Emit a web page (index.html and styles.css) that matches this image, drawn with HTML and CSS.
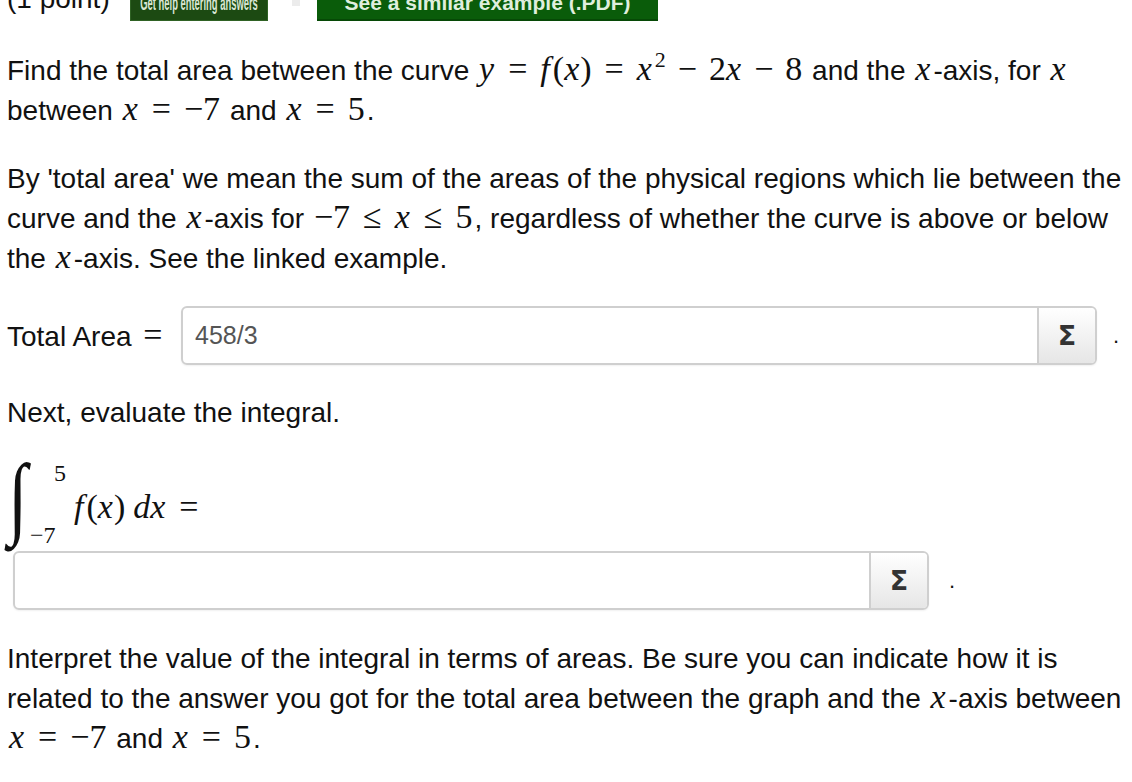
FILE: index.html
```html
<!DOCTYPE html>
<html>
<head>
<meta charset="utf-8">
<link rel="stylesheet" href="styles.css">
</head>
<body>
<div class="top">
  <span class="points">(1 point)</span>
  <span class="btn btn-help"><span class="squeeze">Get help entering answers</span></span>
  <span class="sep"></span>
  <span class="btn btn-example">See a similar example (.PDF)</span>
</div>

<p class="para first">Find the total area between the curve <span class="m"><i>y</i><span class="rel">=</span><i class="f">f</i>(<i>x</i>)<span class="rel">=</span><i>x</i><sup>2</sup><span class="bin">−</span>2<i>x</i><span class="bin">−</span>8</span> and the <span class="m"><i>x</i></span>-axis, for <span class="m"><i>x</i></span><br>between <span class="m"><i>x</i><span class="rel">=</span>−7</span> and <span class="m"><i>x</i><span class="rel">=</span>5</span>.</p>

<p class="para">By 'total area' we mean the sum of the areas of the physical regions which lie between the<br>curve and the <span class="m"><i>x</i></span>-axis for <span class="m">−7<span class="rel">≤</span><i>x</i><span class="rel">≤</span>5</span>, regardless of whether the curve is above or below<br>the <span class="m"><i>x</i></span>-axis. See the linked example.</p>

<div class="answer-row">
  <span class="label">Total Area <span class="m eq">=</span></span>
  <div class="field wide">
    <span class="value">458/3</span>
    <span class="sigma">Σ</span>
  </div>
  <span class="dot">.</span>
</div>

<p class="para next">Next, evaluate the integral.</p>

<div class="integral">
  <span class="int-sign">∫</span>
  <span class="limits"><span class="up">5</span><span class="low">−7</span></span>
  <span class="m integrand"><i class="f">f</i>(<i>x</i>)<span class="thin"></span><i>dx</i><span class="rel">=</span></span>
</div>

<div class="answer-row second">
  <div class="field narrow">
    <span class="value"></span>
    <span class="sigma">Σ</span>
  </div>
  <span class="dot">.</span>
</div>

<p class="para last">Interpret the value of the integral in terms of areas. Be sure you can indicate how it is<br>related to the answer you got for the total area between the graph and the <span class="m"><i>x</i></span>-axis between<br><span class="m"><i>x</i><span class="rel">=</span>−7</span> and <span class="m"><i>x</i><span class="rel">=</span>5</span>.</p>
</body>
</html>
```
FILE: styles.css
```css
html, body {
  margin: 0;
  padding: 0;
  background: #ffffff;
}
body {
  font-family: "Liberation Sans", Arial, sans-serif;
  font-size: 28px;
  color: #111;
  overflow: hidden;
}
.top {
  display: flex;
  align-items: flex-end;
  height: 21px;
  overflow: hidden;
  padding-left: 7px;
}
.points {
  font-size: 28px;
  line-height: 28px;
  margin-bottom: 8px;
  width: 123px;
  white-space: nowrap;
}
.btn {
  display: flex;
  align-items: flex-end;
  justify-content: center;
  font-weight: bold;
  height: 40px;
  box-sizing: border-box;
  white-space: nowrap;
  overflow: hidden;
}
.btn-help {
  width: 138px;
  background: #1c4a12;
  border: 1px solid #2f6224;
  color: #d9e6d4;
  font-size: 20px;
  line-height: 20px;
  padding-bottom: 7px;
}
.squeeze {
  display: inline-block;
  transform: scaleX(0.47);
  transform-origin: center;
  margin: 0 -80px;
}
.sep {
  width: 8px;
  height: 6px;
  background: #ececec;
  align-self: flex-start;
  margin: 0 17px 0 24px;
}
.btn-example {
  width: 341px;
  background: #0a5c0a;
  border-bottom: 2px solid #064906;
  font-size: 21px;
  line-height: 21px;
  padding-bottom: 6px;
  color: #dfeedd;
}
.para {
  margin: 0;
  padding-left: 7px;
  line-height: 40px;
  white-space: nowrap;
}
.para.first {
  margin-top: 30px;
}
.para + .para {
  margin-top: 28px;
}
.m {
  font-family: "Liberation Serif", "Times New Roman", serif;
  font-size: 34px;
  line-height: 1;
  margin: 0 2px;
}
.m i {
  font-style: italic;
  margin-right: 1px;
}
.m i.f {
  margin-right: 3px;
}
.m sup {
  font-size: 22px;
  line-height: 0;
  vertical-align: 13px;
  margin-left: 2px;
}
.rel {
  margin: 0 13px;
}
.bin {
  margin: 0 12px;
}
.answer-row {
  display: flex;
  align-items: center;
  margin-top: 27px;
  padding-left: 7px;
}
.label {
  width: 174px;
  white-space: nowrap;
}
.eq {
  margin-left: 4px;
}
.field {
  display: flex;
  height: 59px;
  box-sizing: border-box;
  border: 2px solid #cfcfcf;
  border-radius: 6px;
  box-shadow: 0 1px 2px rgba(0,0,0,0.06);
  overflow: hidden;
}
.field.wide {
  width: 916px;
}
.field.narrow {
  width: 916px;
  margin-left: 6px;
}
.value {
  flex: 1;
  display: flex;
  align-items: center;
  padding-left: 12px;
  font-size: 25px;
  color: #555;
}
.sigma {
  width: 56px;
  display: flex;
  align-items: center;
  justify-content: center;
  border-left: 2px solid #cfcfcf;
  background: linear-gradient(#ffffff, #e6e6e6);
  font-family: "DejaVu Sans", sans-serif;
  font-weight: bold;
  font-size: 27px;
  color: #333;
}
.dot {
  margin-left: 16px;
  font-size: 22px;
}
.next {
  margin-top: 28px !important;
}
.integral {
  display: flex;
  align-items: center;
  height: 86px;
  margin-top: 24px;
  padding-left: 8px;
}
.int-sign {
  font-family: "Liberation Serif", serif;
  font-size: 70px;
  line-height: 1;
  transform: scaleY(1.3) translateY(-2px);
  width: 30px;
}
.limits {
  display: flex;
  flex-direction: column;
  justify-content: space-between;
  height: 86px;
  font-family: "Liberation Serif", serif;
  font-size: 24px;
  line-height: 24px;
  margin-left: -8px;
  padding-top: 4px;
  box-sizing: border-box;
}
.limits .up {
  margin-left: 24px;
}
.low {
  margin-bottom: -4px;
}
.integrand {
  margin-left: 8px;
  margin-top: 14px;
}
.thin {
  display: inline-block;
  width: 8px;
}
.answer-row.second {
  margin-top: 8px;
}
.answer-row.second .dot {
  margin-left: 20px;
}
.para.last {
  margin-top: 29px;
}
```
